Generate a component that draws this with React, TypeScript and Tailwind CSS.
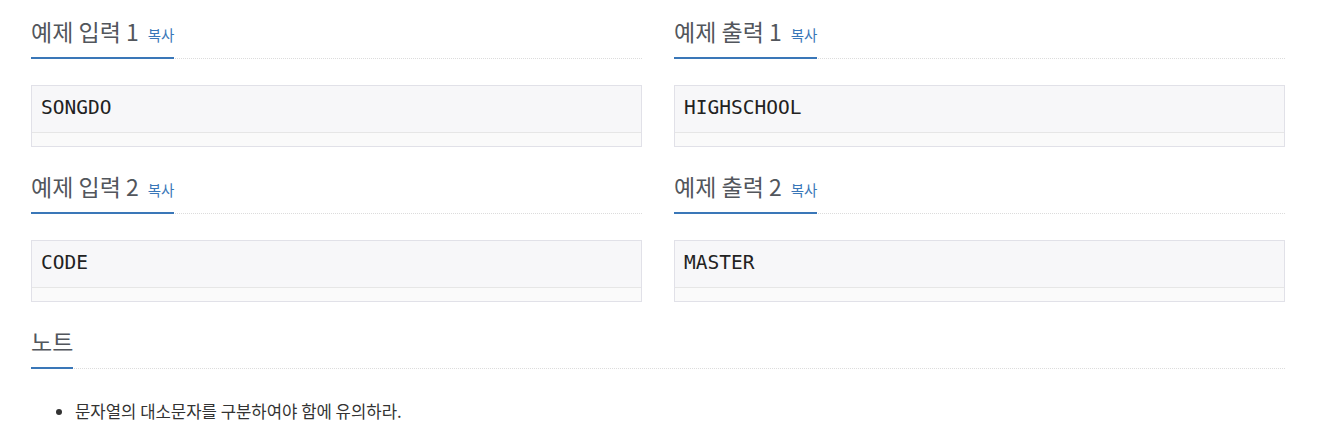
import React from 'react';

const samples = [
  { inTitle: '예제 입력 1', inData: 'SONGDO', outTitle: '예제 출력 1', outData: 'HIGHSCHOOL' },
  { inTitle: '예제 입력 2', inData: 'CODE', outTitle: '예제 출력 2', outData: 'MASTER' },
];

const Headline: React.FC<{ title: string; copy?: boolean }> = ({ title, copy }) => (
  <div className="flex border-b border-dotted border-[#dcdcdc]">
    <h2 className="-mb-px border-b-2 border-[#3a77b8] pb-[11px] text-[23px] leading-[30px] font-normal text-[#52565c]">
      {title}
      {copy && <a className="ml-[9px] text-[14.5px] leading-none text-[#3a77b8] cursor-pointer">복사</a>}
    </h2>
  </div>
);

const SampleBox: React.FC<{ data: string }> = ({ data }) => (
  <div className="mt-[26px] border border-[#e1e1e8] bg-[#f7f7f9]">
    <pre
      className="h-[46px] px-[9px] pt-[9px] text-[19.5px] leading-[26px] text-[#222]"
      style={{ fontFamily: '"DejaVu Sans Mono", monospace' }}
    >
      {data}
    </pre>
    <div className="h-[14px] border-t border-[#e6e6e6] bg-[#fafafa]" />
  </div>
);

export default function App() {
  return (
    <div
      className="bg-white pl-[31px] pt-[16px] w-[1285px] min-h-[447px]"
      style={{ fontFamily: '"Noto Sans CJK KR", "Noto Sans", sans-serif' }}
    >
      {samples.map((s, i) => (
        <div key={i} className={`grid grid-cols-2 gap-x-[32px] ${i > 0 ? 'mt-[24px]' : ''}`}>
          <section>
            <Headline title={s.inTitle} copy />
            <SampleBox data={s.inData} />
          </section>
          <section>
            <Headline title={s.outTitle} copy />
            <SampleBox data={s.outData} />
          </section>
        </div>
      ))}

      <section className="mt-[24px]">
        <Headline title="노트" />
        <ul className="mt-[31px] list-disc pl-[44px] text-[16.7px] leading-[22px] text-[#333]">
          <li>문자열의 대소문자를 구분하여야 함에 유의하라.</li>
        </ul>
      </section>
    </div>
  );
}
